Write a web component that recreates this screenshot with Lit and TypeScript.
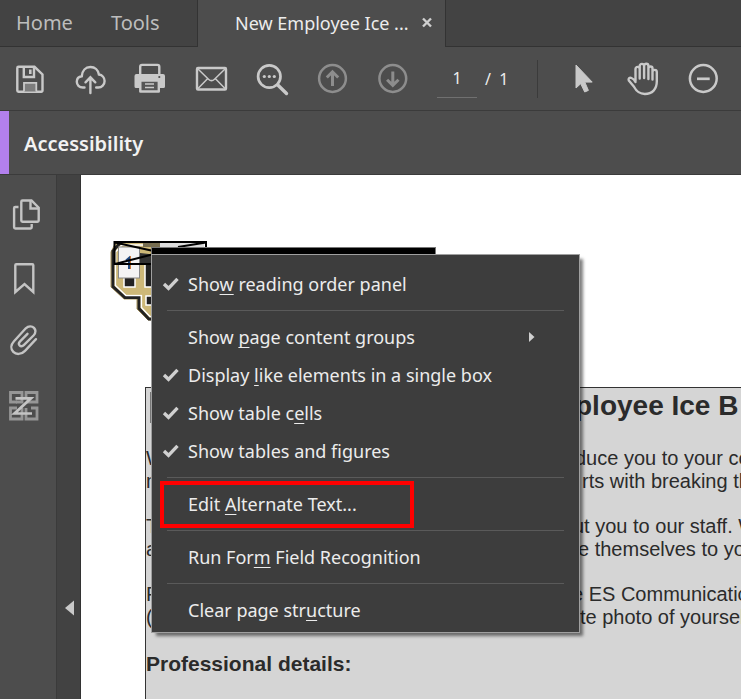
import { LitElement, html, svg, css, nothing, TemplateResult } from "lit";
import { customElement, property } from "lit/decorators.js";

const icons: Record<string, TemplateResult> = {
  save: svg`
    <path d="M4.500 3.800H20.500L28.500 11.500V27.500a1.200 1.200 0 0 1-1.200 1.200H4.500a1.200 1.200 0 0 1-1.200-1.200V5a1.200 1.200 0 0 1 1.200-1.200Z"/>
    <path d="M9.800 4V14H20V4"/><path d="M16.300 6.500v4.500" stroke-width="2.600"/>
    <path d="M10 28.500V19.800H22.300V28.500" fill="#7d7d7d" stroke-width="1.800"/>`,
  cloud: svg`
    <path d="M10.500 24.500H8.800C5.200 24.500 2.800 22 2.800 18.800c0-3 2-5.300 5-5.600C8.200 7.600 11.600 4 16.400 4c4.600 0 7.800 3.200 8.500 7.500 3.400.500 5.700 3.200 5.700 6.500 0 3.700-2.800 6.500-6.300 6.500h-2.100" stroke-linecap="round"/>
    <path d="M16.400 30V14.500M11.500 19.300l4.900-5 4.900 5" stroke-linecap="round"/>`,
  print: svg`
    <path d="M6.200 12V3.700a1.800 1.800 0 0 1 1.800-1.800H23.500a1.800 1.800 0 0 1 1.800 1.800V12"/>
    <path d="M2.500 11H29a2 2 0 0 1 2 2v10.500a1.500 1.500 0 0 1-1.500 1.500H2a1.500 1.500 0 0 1-1.500-1.500V13a2 2 0 0 1 2-2Z" fill="currentColor" stroke="none"/>
    <circle cx="25.300" cy="14" r="1.100" fill="#4d4d4d" stroke="none"/>
    <path d="M6.300 17.500H24.800V28.500H6.300Z" fill="#555" stroke-linejoin="round"/>
    <path d="M11 21h9M11 24.500h9" stroke-width="1.400"/>`,
  mail: svg`
    <rect x="3" y="5" width="29" height="21.500" rx="1"/>
    <path d="M4 6l10.500 10.200c1.800 1.700 4.200 1.700 6 0L31 6M4 25.500l9.500-9.800M31 25.500l-9.500-9.800" stroke-width="1.500"/>`,
  search: svg`
    <circle cx="15.300" cy="13.500" r="11.200" stroke-width="2.700"/>
    <path d="M23.800 22l8.700 8.500" stroke-width="3.400" stroke-linecap="round"/>
    <g fill="currentColor" stroke="none"><circle cx="10.300" cy="13.500" r="1.600"/><circle cx="15.300" cy="13.500" r="1.600"/><circle cx="20.300" cy="13.500" r="1.600"/></g>`,
  up: svg`<circle cx="16.500" cy="15.500" r="13.400" stroke-width="2.500"/><path d="M16.500 23V9.500M10.800 14.500l5.700-5.700 5.700 5.700" stroke-width="3"/>`,
  down: svg`<circle cx="16.800" cy="15.500" r="13.400" stroke-width="2.500"/><path d="M16.800 8.500V22M11.100 16.700l5.700 5.700 5.700-5.700" stroke-width="3"/>`,
  pointer: svg`<path d="M9 2V25l4.700-4.300 4 8.300 3.700-1.600-3.600-8.300h7.400Z" fill="currentColor" stroke-width="1" stroke-linejoin="round"/>`,
  hand: svg`<path d="M8.500 18V6a2.100 2.100 0 0 1 4.200 0V15.500V3.100a2.200 2.200 0 0 1 4.400 0V15V2.900a2.100 2.100 0 0 1 4.300 0V16V5.500a2 2 0 0 1 4.100 0V16.500V9a2 2 0 0 1 4.300 0V18.500c0 7.500-4.500 12.500-12 12.500-6 0-8.500-3-11-7.500L1.800 17.500c-.900-2 .9-3.300 2.700-2.500 1.800.700 3 2 4 4" stroke-linejoin="round" stroke-linecap="round"/>`,
  minus: svg`<circle cx="16.300" cy="15.500" r="13.400" stroke-width="2.500"/><path d="M10 15.800h12.700" stroke-width="2.700"/>`,
  pages: svg`
    <path d="M14.500 1.500H23.500L30.700 8.700V21.500a1.200 1.200 0 0 1-1.200 1.200H14.500a1.200 1.200 0 0 1-1.200-1.200V2.700a1.200 1.200 0 0 1 1.200-1.200Z"/>
    <path d="M22.500 1.500V9.500H30.500"/><path d="M10.500 8H7.300a1.200 1.200 0 0 0-1.200 1.200V28.300a1.200 1.200 0 0 0 1.200 1.200H22.500a1.200 1.200 0 0 0 1.200-1.200V25"/>`,
  bookmark: svg`<path d="M7.300 3.300a1 1 0 0 1 1-1H24.300a1 1 0 0 1 1 1V30L16.500 22 7.300 30Z"/>`,
  clip: svg`<path d="M28.000 14.200 17 25.800C13 30 8 29.600 5.300 26.800 2.600 24 2.700 19.700 6 16.200L17.800 3.300c2.700-2.600 6.300-2.400 8.200-.400 1.900 2.100 1.900 5-.500 7.600L15.800 20.200c-1.500 1.500-3.300 1.300-4.200.300-1-1.100-.900-2.700.500-4.100l7.400-7.600" stroke-linecap="round"/>`,
  order: svg`
    <g stroke="#969696" stroke-width="2.800"><path d="M9 14H2.500V4.500H14V9M18 9V4.500H29V14H23M9 20H2.500V31H14V27M18 27V31H29V20H23"/><path d="M14 9v5H8M18 14h5M18 27v-7M14 20v7"/></g>
    <path d="M7.500 10.300H23L6.500 25.500H24" stroke-width="2.700"/>`,
};

const icon = (name: string) => html`
  <svg class="icon" viewBox="0 0 32 32" aria-hidden="true" fill="none" stroke="currentColor">${icons[name]}</svg>`;

const iconStyles = css`
  button { font: inherit; color: inherit; background: none; border: 0; padding: 0; margin: 0; cursor: pointer; }
  .icon { display: block; width: 32px; height: 32px; overflow: visible; stroke-width: 2.4; }
`;

@customElement("tab-strip")
export class TabStrip extends LitElement {
  static styles = [iconStyles, css`
    :host { display: flex; height: 47px; font-size: 20px; color: #bdbdbd; background: #434343; }
    .fixed, .rest { border-bottom: 1px solid #333; box-sizing: border-box; }
    .fixed { display: flex; align-items: center; gap: 38px; width: 198px; padding: 0 0 2px 16px; border-right: 1px solid #333; }
    .active { display: flex; align-items: center; justify-content: space-between; width: 247px; box-sizing: border-box; padding: 0 12px 2px 37px; background: #4d4d4d; color: #ececec; font-size: 18px; }
    .close { width: 12px; height: 12px; }
    .close svg { display: block; }
    .rest { flex: 1; border-left: 1px solid #333; }
  `];
  render() {
    return html`
      <nav class="fixed"><button>Home</button><button>Tools</button></nav>
      <div class="active"><span>New Employee Ice ...</span>
        <button class="close" aria-label="Close tab"><svg width="12" height="12" viewBox="0 0 12 12" fill="none" stroke="#d0d0d0" stroke-width="2.400"><path d="M2 1.500l8 8M10 1.500l-8 8"/></svg></button>
      </div>
      <div class="rest"></div>`;
  }
}

@customElement("tool-bar")
export class ToolBar extends LitElement {
  static styles = [iconStyles, css`
    :host { display: flex; align-items: center; height: 63px; padding-left: 14px; color: #c9c9c9; font-size: 16px; border-bottom: 1px solid #3b3b3b; white-space: nowrap; overflow: hidden; }
    .group, .page, .total, .divider { flex: none; }
    .group { display: flex; gap: 28px; margin-right: 30px; }
    .dim { color: #8d8d8d; margin-right: 29px; }
    .page { width: 40px; height: 38px; box-sizing: border-box; padding: 0; border: 0; border-bottom: 1px solid #707070; background: none; color: #ececec; font: inherit; text-align: center; }
    .total { width: 52px; padding-left: 8px; color: #ececec; white-space: pre; }
    .divider { width: 1px; height: 38px; background: #3b3b3b; margin-right: 29px; }
  `];
  render() {
    const tool = (name: string, label: string) => html`<button aria-label=${label}>${icon(name)}</button>`;
    return html`
      <div class="group">${tool("save", "Save")}${tool("cloud", "Upload")}${tool("print", "Print")}${tool("mail", "Email")}${tool("search", "Find")}</div>
      <div class="group dim">${tool("up", "Previous page")}${tool("down", "Next page")}</div>
      <input class="page" aria-label="Page number" value="1" />
      <span class="total">/  1</span>
      <span class="divider"></span>
      <div class="group">${tool("pointer", "Select")}${tool("hand", "Pan")}${tool("minus", "Zoom out")}</div>`;
  }
}

@customElement("side-bar")
export class SideBar extends LitElement {
  static styles = [iconStyles, css`
    :host { display: flex; flex: none; color: #c4c4c4; }
    .panels { display: flex; flex-direction: column; gap: 31px; width: 56px; box-sizing: border-box; padding: 24px 0 0 8px; }
    .panels button { width: 32px; }
    .strip { width: 25px; box-sizing: border-box; padding: 424px 0 0 8px; background: #424242; border-left: 1px solid #3b3b3b; border-right: 1px solid #333; }
    .strip svg { display: block; }
  `];
  render() {
    return html`
      <nav class="panels">
        ${[["pages", "Page thumbnails"], ["bookmark", "Bookmarks"], ["clip", "Attachments"], ["order", "Reading order"]].map(
          ([name, label]) => html`<button aria-label=${label}>${icon(name)}</button>`)}
      </nav>
      <div class="strip"><button aria-label="Collapse"><svg width="10" height="16" viewBox="0 0 10 16"><path d="M9 .500V15.500L0 8Z" fill="#c9c9c9"/></svg></button></div>`;
  }
}

type Entry = { before: string; key: string; after: string; checked?: boolean; sub?: boolean; marked?: boolean } | null;

const entries: Entry[] = [
  { before: "Sho", key: "w", after: " reading order panel", checked: true },
  null,
  { before: "Show ", key: "p", after: "age content groups", sub: true },
  { before: "Display ", key: "l", after: "ike elements in a single box", checked: true },
  { before: "Show table c", key: "e", after: "lls", checked: true },
  { before: "Show tables and f", key: "i", after: "gures", checked: true },
  null,
  { before: "Edit ", key: "A", after: "lternate Text...", marked: true },
  null,
  { before: "Run For", key: "m", after: " Field Recognition" },
  null,
  { before: "Clear page str", key: "u", after: "cture" },
];

@customElement("context-menu")
export class ContextMenu extends LitElement {
  static styles = [iconStyles, css`
    :host { display: block; box-sizing: border-box; padding: 10px 0 3px; background: #3d3d3d; border: 1px solid #a0a0a0; box-shadow: 4px 4px 3px -1px rgba(0, 0, 0, 0.5); color: #ececec; font-size: 18px; }
    .item { position: relative; display: grid; grid-template-columns: 36px 1fr 52px; align-items: center; width: 100%; height: 38px; text-align: left; white-space: nowrap; }
    .check { justify-self: start; margin-left: 10px; }
    .label { grid-column: 2; }
    .label u { text-underline-offset: 3px; text-decoration-thickness: 1px; text-decoration-skip-ink: none; }
    .sep { border: 0; height: 1px; margin: 7px 15px; background: #5a5a5a; }
    .mark { position: absolute; left: 8px; top: -4px; width: 254px; height: 47px; box-sizing: border-box; border: 4px solid #f00; }
  `];
  render() {
    return html`<div role="menu">${entries.map((e) => e === null
      ? html`<hr class="sep" />`
      : html`<button class="item" role=${e.checked ? "menuitemcheckbox" : "menuitem"} aria-checked=${e.checked ? "true" : nothing}>
          ${e.checked ? html`<svg class="check" width="18" height="16" viewBox="0 0 18 16" fill="none" stroke="#d0d0d0" stroke-width="3.400"><path d="M2 8l4.500 4.300L15.500 2.800"/></svg>` : nothing}
          <span class="label">${e.before}<u>${e.key}</u>${e.after}</span>
          ${e.sub ? html`<svg width="8" height="10" viewBox="0 0 8 10"><path d="M2 0v10l5.500-5Z" fill="#d0d0d0"/></svg>` : nothing}
          ${e.marked ? html`<span class="mark"></span>` : nothing}
        </button>`)}</div>`;
  }
}

/* Each line: first letter, width up to where the text re-emerges beside the menu, remainder. */
const paragraphs: [string, number, string][][] = [
  [["W", 429, "duce you to your co"], ["m", 436, "rts with breaking th"]],
  [["T", 427, "ut you to our staff. W"], ["a", 432, "e themselves to yo"]],
  [["P", 426, "e ES Communicatio"], ["(", 434, "te photo of yoursel"]],
];

@customElement("document-page")
export class DocumentPage extends LitElement {
  @property() heading = "Professional details:";
  static styles = css`
    :host { display: block; position: relative; flex: 1; min-width: 0; overflow: hidden; background: #fff; color: #2b2b2b; font-family: "Liberation Sans", Arial, sans-serif; font-size: 20px; line-height: 23px; }
    .figure { position: absolute; left: 27px; top: 64px; }
    .band { position: absolute; left: 70px; top: 72px; width: 285px; height: 8px; box-sizing: border-box; background: #000; border: 1px solid #777; }
    .region { margin: 212px 0 0 64px; min-height: 312px; box-sizing: border-box; background: #d5d5d5; border-top: 1px solid #333; border-left: 1px solid #333; white-space: nowrap; }
    .title { display: flex; margin: 0 0 23px; font-size: 28px; line-height: 36px; }
    .slot { flex: none; width: 425px; box-sizing: border-box; border-left: 1px solid #777; margin: 4px 0 0 4px; height: 31px; }
    .para { margin: 0 0 22px; }
    .line { display: flex; }
    .start { flex: none; }
    .sub { margin: 0; font-size: 21px; line-height: 26px; }
    .menu { position: absolute; left: 70px; top: 79px; width: 429px; font-family: "Noto Sans", "Segoe UI", sans-serif; line-height: 24px; }
  `;
  render() {
    return html`
      <svg class="figure" width="102" height="86" viewBox="0 0 102 86" role="img" aria-label="Logo">
        <path d="M8 3H60V81H40L29 70V60H16L3 48V13Z" fill="#cdb878" stroke="#a8935c" stroke-width="1"/>
        <path d="M12 4L5 12V47.500L17 58.500H31V69.500L41 80H60" fill="none" stroke="#222" stroke-width="3"/>
        <path d="M60 6H14L7.500 13V46.500L18 56.500H33.500V68.500L42 77.500H60" fill="none" stroke="#fff" stroke-width="1.500"/>
        <path d="M8.500 46L18.500 55.500H34.500V68L42.500 76.500H60V26H8.500Z" fill="#cdb878"/>
        <rect x="16" y="37" width="11" height="11" fill="#222" stroke="#fff" stroke-width="1.500"/>
        <path d="M50 19H37V48H50ZM50 57H38V66H50Z" fill="#222" stroke="#fff" stroke-width="1.500"/>
        <rect x="35" y="4" width="17" height="4" fill="#766d50"/><rect x="52" y="4" width="44" height="4" fill="#ddd"/>
        <path d="M32 14L50 16V24H32Z" fill="#333"/>
        <rect x="10.500" y="8" width="21" height="31" fill="#f4f4f4" stroke="#888"/>
        <path d="M18 21.500l3-2.500V30" fill="none" stroke="#234a80" stroke-width="2"/><path d="M22.500 17v13" stroke="#c97a3c" stroke-width="1"/>
        <path d="M6.500 3H98V25H6.500ZM7 3.500 50 13M7 25 50 14M98 3.500 70 8" fill="none" stroke="#000" stroke-width="2"/>
      </svg>
      <div class="band"></div>
      <article class="region">
        <h1 class="title"><span class="slot"></span>ployee Ice B</h1>
        ${paragraphs.map((lines) => html`<p class="para">${lines.map(([first, width, rest]) => html`
          <span class="line"><span class="start" style="width:${width}px">${first}</span>${rest}</span>`)}</p>`)}
        <h2 class="sub">${this.heading}</h2>
      </article>
      <context-menu class="menu"></context-menu>`;
  }
}

@customElement("app-root")
export class AppRoot extends LitElement {
  static styles = css`
    :host { display: flex; flex-direction: column; min-height: 100vh; background: #4d4d4d; font-family: "Noto Sans", "Segoe UI", sans-serif; }
    .panel-title { display: flex; align-items: center; height: 63px; box-sizing: border-box; margin: 0; padding: 2px 0 0 15px; border-left: 9px solid #b380ee; color: #f2f2f2; font-size: 20px; font-weight: 600; }
    .rule { height: 1px; background: #3b3b3b; }
    .body { display: flex; flex: 1; }
  `;
  render() {
    return html`
      <tab-strip></tab-strip>
      <tool-bar></tool-bar>
      <h2 class="panel-title">Accessibility</h2>
      <div class="rule"></div>
      <main class="body"><side-bar></side-bar><document-page></document-page></main>`;
  }
}
